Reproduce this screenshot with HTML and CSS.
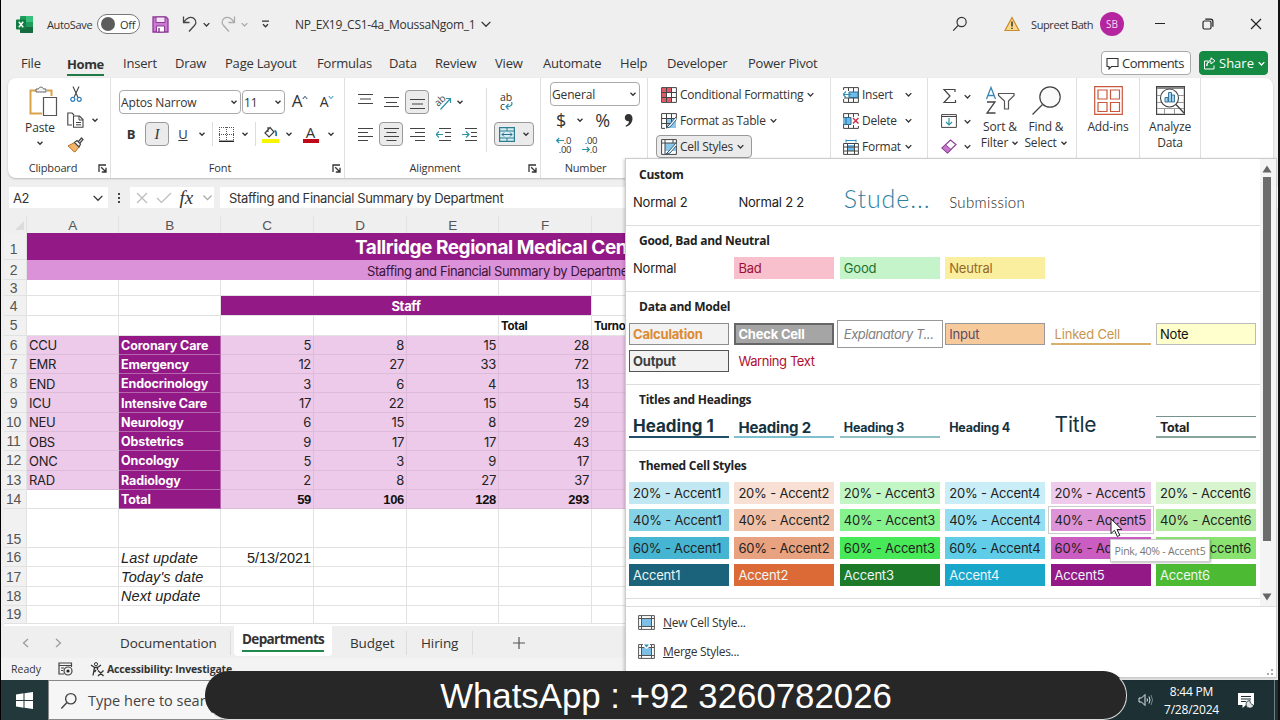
FILE: index.html
```html
<!DOCTYPE html>
<html lang="en">
<head>
  <meta charset="UTF-8" />
  <meta name="viewport" content="width=device-width, initial-scale=1.0" />
  <title>NP_EX19_CS1-4a_MoussaNgom_1 - Excel</title>
  <link rel="stylesheet" href="styles.css">
</head>
<body>
  <svg class="defs" width="0" height="0">
    <symbol id="chev" viewBox="0 0 8 8"><path d="M1.5 2.8 4 5.3 6.5 2.8" fill="none" stroke="currentColor" stroke-width="1.3" vector-effect="non-scaling-stroke"/></symbol>
    <symbol id="launch" viewBox="0 0 9 9"><path d="M1 8V1H8M3.2 3.2 7.5 7.5M8 3.8V8H3.8" fill="none" stroke="#333" stroke-width="1.3"/></symbol>
    <symbol id="search" viewBox="0 0 16 16"><circle cx="9.6" cy="6" r="4.6" fill="none" stroke="currentColor" stroke-width="1.2"/><path d="M6.2 9.4 1.2 14.6" stroke="currentColor" stroke-width="1.3"/></symbol>
    <symbol id="cellstyle" viewBox="0 0 17 15"><path d="M.6.6H16.400V14.400H.6Z" fill="#fff" stroke="#555"/><path d="M4 3.500H13V11.500H4Z" fill="#7cc0e8"/><path d="M3.500 1V14M13.500 1V14M1 3.500H16M1 11.500H16" stroke="#555" fill="none"/></symbol>
  </svg>

  <div class="window">
    <header class="titlebar">
      <svg class="xl" width="17" height="17" viewBox="0 0 17 17"><rect x="4" y="0" width="13" height="17" rx="1" fill="#1f9c5c"/><path d="M10 0H16a1 1 0 0 1 1 1V6H10Z" fill="#35c07c"/><path d="M4 11H17V16a1 1 0 0 1-1 1H5a1 1 0 0 1-1-1Z" fill="#156b3e"/><rect x="0" y="3.5" width="10" height="10" rx="1" fill="#107c41"/><path d="M2.8 5.8 7.2 11.2M7.2 5.8 2.8 11.2" stroke="#fff" stroke-width="1.5"/></svg>
      <span class="autosave">AutoSave</span>
      <span class="toggle"><i></i>Off</span>
      <svg class="save" width="17" height="17" viewBox="0 0 17 17"><path d="M1 1H14L16 3V16H1Z" fill="#c97bd0" stroke="#8e3a98" stroke-width="1.3"/><path d="M4 1H13V6.5H4Z" fill="#f3e3f5" stroke="#8e3a98"/><path d="M4.500 10H12.500V16H4.500Z" fill="#fff" stroke="#8e3a98"/><path d="M7 12V16" stroke="#8e3a98" stroke-width="1.5"/></svg>
      <svg class="undo" width="18" height="18" viewBox="0 0 18 18"><path d="M2.500 1.500V7.500H8.500M2.800 7.200C6 2.500 10 1.200 13 3.500 16.500 6.500 14.500 9.500 13 11L8 16.500" fill="none" stroke="#444" stroke-width="1.300"/></svg>
      <svg class="more" width="9" height="9"><use href="#chev"/></svg>
      <svg class="redo" width="18" height="18" viewBox="0 0 18 18"><path d="M15.500 1.500V7.500H9.500M15.200 7.200C12 2.500 8 1.200 5 3.500 1.500 6.500 3.500 9.500 5 11L10 16.500" fill="none" stroke="#aaa" stroke-width="1.300"/></svg>
      <svg class="more pale" width="9" height="9"><use href="#chev"/></svg>
      <svg class="customize" width="9" height="9" viewBox="0 0 9 9"><path d="M1 1.200H8M2 4.200 4.500 6.800 7 4.200" fill="none" stroke="#333" stroke-width="1.300"/></svg>
      <span class="docname">NP_EX19_CS1-4a_MoussaNgom_1</span>
      <svg width="14" height="14"><use href="#chev"/></svg>
      <svg class="find-icon" width="16" height="16"><use href="#search"/></svg>
      <svg class="alert" width="16" height="16" viewBox="0 0 16 16"><path d="M8 1.500 15 14.500H1Z" fill="#f9d98a" stroke="#c98b2b" stroke-width="1.200"/><path d="M8 5.500V10.500M8 11.700V13" stroke="#333" stroke-width="1.500"/></svg>
      <span class="username">Supreet Bath</span>
      <span class="avatar">SB</span>
      <svg class="winbtn" width="12" height="12"><path d="M1 5.500H11" stroke="#222"/></svg>
      <svg class="winbtn" width="12" height="12" viewBox="0 0 12 12"><rect x="1" y="3" width="8" height="8" rx="1.500" fill="none" stroke="#222" stroke-width="1.200"/><path d="M3.300 1.100H8.500A2.400 2.400 0 0 1 10.900 3.500V8.700" fill="none" stroke="#222" stroke-width="1.200"/></svg>
      <svg class="winbtn" width="12" height="12"><path d="M1 1 11 11M11 1 1 11" stroke="#222" stroke-width="1.200"/></svg>
    </header>

    <nav class="tabs">
      <span>File</span><span class="active">Home</span><span>Insert</span><span>Draw</span><span>Page Layout</span><span>Formulas</span><span>Data</span><span>Review</span><span>View</span><span>Automate</span><span>Help</span><span>Developer</span><span>Power Pivot</span>
      <button class="comments"><svg width="13" height="13" viewBox="0 0 13 13"><path d="M1 1.500H12V9.500H5.500L3 12V9.500H1Z" fill="none" stroke="#333" stroke-width="1.100"/></svg>Comments</button>
      <button class="share"><svg width="13" height="13" viewBox="0 0 13 13"><path d="M5 4H1.500V12H11V8.500M3.800 9C4 6 5.500 4.800 8 4.600V7L12 3.800 8 .8V3C6 3.200 3.800 4.800 3.800 9Z" fill="none" stroke="#fff"/></svg>Share<svg width="9" height="9"><use href="#chev"/></svg></button>
    </nav>

    <section class="ribbon">
      <div class="group clipboard">
        <div class="paste">
          <svg width="30" height="32" viewBox="0 0 30 32"><path d="M8 4.500H2.500V27.500H14M19 4.500H23.500V10" fill="none" stroke="#dba24a" stroke-width="2"/><path d="M8 6V3H10.500C11 .5 15 .5 15.500 3H18V6Z" fill="#f4f4f4" stroke="#666"/><path d="M15.500 11.500H28.500V29.500H15.500Z" fill="#fff" stroke="#555" stroke-width="1.200"/></svg>
          <span>Paste</span>
          <svg width="8" height="8"><use href="#chev"/></svg>
        </div>
        <div class="clip-tools">
          <svg width="12" height="17" viewBox="0 0 12 17"><path d="M3 .5 8 11.500M9 .5 4 11.500" stroke="#444" stroke-width="1.100"/><circle cx="2.800" cy="13.300" r="2" fill="none" stroke="#2f7fb8" stroke-width="1.200"/><circle cx="9.200" cy="13.300" r="2" fill="none" stroke="#2f7fb8" stroke-width="1.200"/></svg>
          <span class="row"><svg width="17" height="16" viewBox="0 0 17 16"><path d="M5 13H.8V1H5L7 3M6.500 4H12.500L16 7.500V15.200H6.500Z" fill="none" stroke="#444" stroke-width="1.100"/><path d="M12 4V8H16M9 10.500H14M9 12.800H14" fill="none" stroke="#444"/></svg><svg width="8" height="8"><use href="#chev"/></svg></span>
          <svg width="17" height="16" viewBox="0 0 17 16"><path d="M1 9 7.500 5.500 12 10 8 15 5.500 13.500 4.500 12Z" fill="#f3b46c" stroke="#bb7326"/><path d="M7.500 5.500 10 3.500 13.500 7 12 10ZM11.500 4.500 14.500 1 16 2.500 13 6" fill="#fff" stroke="#444" stroke-width="1.200"/></svg>
        </div>
        <div class="caption">Clipboard<svg width="9" height="9"><use href="#launch"/></svg></div>
      </div>

      <div class="group font">
        <div class="font-row1">
          <span class="select">Aptos Narrow<svg width="8" height="8"><use href="#chev"/></svg></span>
          <span class="select">11<svg width="8" height="8"><use href="#chev"/></svg></span>
          <span class="bigA">A<svg width="6" height="5" viewBox="0 0 6 5"><path d="M.8 4 3 1.300 5.200 4" fill="none" stroke="#246" stroke-width="1"/></svg></span>
          <span class="bigA small">A<svg width="6" height="5" viewBox="0 0 6 5"><path d="M.8 1 3 3.700 5.200 1" fill="none" stroke="#28a" stroke-width="1"/></svg></span>
        </div>
        <div class="font-row2">
          <b>B</b>
          <span class="pressed"><i>I</i></span>
          <u>U</u>
          <svg width="8" height="8"><use href="#chev"/></svg>
          <span class="vline"></span>
          <svg width="15" height="15" viewBox="0 0 15 15"><path d="M.5 0V14M14.500 0V14M7.500 0V14M0 .5H15M0 7.500H15" stroke="#555" stroke-dasharray="1 1"/><path d="M0 14.300H15" stroke="#222" stroke-width="1.400"/></svg>
          <svg width="8" height="8"><use href="#chev"/></svg>
          <span class="vline"></span>
          <svg width="17" height="17" viewBox="0 0 17 17"><path d="M3 7 8 1.500 12 6 7 11ZM6 1V6" fill="none" stroke="#444" stroke-width="1.200"/><path d="M12.500 4.500C14.500 5 14.500 7 14 10" fill="none" stroke="#26709c" stroke-width="1.800"/><rect x="0" y="13" width="17" height="4" fill="#f6f600"/></svg>
          <svg width="8" height="8"><use href="#chev"/></svg>
          <span class="fontcolor">A</span>
          <svg width="8" height="8"><use href="#chev"/></svg>
        </div>
        <div class="caption">Font<svg width="9" height="9"><use href="#launch"/></svg></div>
      </div>

      <div class="group alignment">
        <div class="align-body">
          <div class="align-grid">
            <svg class="up" width="15" height="15" viewBox="0 0 15 15"><path d="M0 2.500H15M2 7H13M0 11.500H15" stroke="#444" stroke-width="1.100"/></svg>
            <svg width="15" height="15" viewBox="0 0 15 15"><path d="M0 2.500H15M2 7.500H13M0 11.500H15" stroke="#444" stroke-width="1.100"/></svg>
            <span class="pressed"><svg width="15" height="15" viewBox="0 0 15 15"><path d="M0 4.500H15M2 9H13M0 13.500H15" stroke="#444" stroke-width="1.100"/></svg></span>
            <svg width="20" height="20" viewBox="0 0 20 20"><text x="2" y="13" font-size="10" transform="rotate(-42 6 10)">ab</text><path d="M7.500 17.500 17 7M13 6.500H17.500V11" fill="none" stroke="#2b93a8" stroke-width="1.200"/></svg>
            <svg class="near" width="8" height="8"><use href="#chev"/></svg>
            <svg width="15" height="15" viewBox="0 0 15 15"><path d="M0 1.500H15M0 5.500H10M0 9.500H15M0 13.500H10" stroke="#444" stroke-width="1.100"/></svg>
            <span class="pressed"><svg width="15" height="15" viewBox="0 0 15 15"><path d="M0 1.500H15M2.500 5.500H12.500M0 9.500H15M2.500 13.500H12.500" stroke="#444" stroke-width="1.100"/></svg></span>
            <svg width="15" height="15" viewBox="0 0 15 15"><path d="M0 1.500H15M5 5.500H15M0 9.500H15M5 13.500H15" stroke="#444" stroke-width="1.100"/></svg>
            <svg width="15" height="15" viewBox="0 0 15 15"><path d="M3 1.500H15M9 5.500H15M9 9.500H15M3 13.500H15" stroke="#444" stroke-width="1.100"/><path d="M0 7.500H7M3 4.500 0 7.500 3 10.500" fill="none" stroke="#2b93a8" stroke-width="1.200"/></svg>
            <svg width="15" height="15" viewBox="0 0 15 15"><path d="M3 1.500H15M9 5.500H15M9 9.500H15M3 13.500H15" stroke="#444" stroke-width="1.100"/><path d="M0 7.500H7M4 4.500 7 7.500 4 10.500" fill="none" stroke="#2b93a8" stroke-width="1.200"/></svg>
          </div>
          <span class="vline tall"></span>
          <div class="wrapcol">
            <div class="wrap-icon"><span>ab</span><span>c<svg width="8" height="9" viewBox="0 0 8 9"><path d="M6.500 0C8 3 5.500 4.800 1 4.800M3.500 2 1 4.800 3.500 7.500" fill="none" stroke="#2b93a8" stroke-width="1.200"/></svg></span></div>
            <span class="pressed merge"><svg width="16" height="15" viewBox="0 0 16 15"><path d="M.6.6H15.400V14.400H.6Z" fill="#d8eef4" stroke="#2b7d90" stroke-width="1.200"/><path d="M1 4H15M1 11H15M8 1V4M8 11V14" stroke="#2b7d90"/><path d="M3 7.500H13M5 5.500 3 7.500 5 9.500M11 5.500 13 7.500 11 9.500" fill="none" stroke="#2a6d8c"/></svg><svg width="8" height="8"><use href="#chev"/></svg></span>
          </div>
        </div>
        <div class="caption">Alignment<svg width="9" height="9"><use href="#launch"/></svg></div>
      </div>

      <div class="group number">
        <span class="select">General<svg width="8" height="8"><use href="#chev"/></svg></span>
        <div class="num-row"><span>$</span><svg width="8" height="8"><use href="#chev"/></svg><span>%</span><svg width="9" height="13" viewBox="0 0 9 13"><path d="M4.500 0C7 0 8.500 1.800 8.500 4.500 8.500 8.500 6 11.500 2 12.800L1.500 11.800C4 10.500 5 9 5 7.300 2.500 7.500 .8 6 .8 3.700 .8 1.500 2.500 0 4.500 0Z" fill="#333"/></svg></div>
        <div class="dec-row">
          <div><span class="r"><svg width="8" height="7" viewBox="0 0 8 7"><path d="M.7 3.500H8M3.200 1 .7 3.500 3.200 6" fill="none" stroke="#2b93a8" stroke-width="1.200"/></svg>.0</span><span class="r">.00</span></div>
          <div><span class="r">.00</span><span class="r"><svg width="8" height="7" viewBox="0 0 8 7"><path d="M0 3.500H7.300M4.800 1 7.300 3.500 4.800 6" fill="none" stroke="#2b93a8" stroke-width="1.200"/></svg>.0</span></div>
        </div>
        <div class="caption">Number</div>
      </div>

      <div class="group styles">
        <span class="cmd"><svg width="16" height="16" viewBox="0 0 16 16"><path d="M.6.6H15.400V15.400H.6Z" fill="#fff" stroke="#444"/><path d="M1 1H10V5H5V11H11V15H1Z" fill="#e05a6a"/><path d="M5.500 1V15M10.500 1V15M1 5.500H15M1 10.500H15" stroke="#444"/></svg>Conditional Formatting<svg width="9" height="9"><use href="#chev"/></svg></span>
        <span class="cmd"><svg width="16" height="16" viewBox="0 0 16 16"><path d="M15.400 6V.6H.6V15.400H4" fill="none" stroke="#444"/><path d="M5 6H15V15H5Z" fill="#8ac7ea"/><path d="M5.500 1V15M10.500 1V11M1 5.500H15M1 10.500H11" stroke="#444"/><path d="M15 4 8 12 5 15 9 14 15.500 6.500" fill="#fff" stroke="#2d5d7a"/></svg>Format as Table<svg width="9" height="9"><use href="#chev"/></svg></span>
        <span class="cmd on"><svg width="16" height="16" viewBox="0 0 16 16"><path d="M.6.6H15.400V15.400H.6Z" fill="#fff" stroke="#444"/><path d="M4 4H15V12H4Z" fill="#8ac7ea"/><path d="M4 1V15M1 4H15M12 1V4" stroke="#444"/><path d="M15 4 8 12 5 15 9 14 15.500 6.500" fill="#fff" stroke="#2d5d7a"/></svg>Cell Styles<svg width="9" height="9"><use href="#chev"/></svg></span>
      </div>

      <div class="group cells">
        <span class="cmd"><svg width="16" height="16" viewBox="0 0 16 16"><path d="M.6 3V.6H15.400V15.400H.6V12M5.500 1V4M10.500 1V15M1 11H15M5.500 11V15" fill="none" stroke="#444"/><path d="M6 5H15V10.500H6Z" fill="#6cbbe8" stroke="#2d6d94"/><path d="M0 7.500H8M3 4.500 0 7.500 3 10.500" fill="none" stroke="#2d8fbd" stroke-width="1.200"/></svg>Insert<svg width="9" height="9"><use href="#chev"/></svg></span>
        <span class="cmd"><svg width="16" height="16" viewBox="0 0 16 16"><path d="M.6 4V.6H15.400V3M.6 12V15.400H15.400V13M5.500 1V4M10.500 1V4M5.500 12V15M10.500 12V15" fill="none" stroke="#444"/><path d="M0 4.500H8V11.500H0M3 4.500V11.500" fill="#6cbbe8" stroke="#2d6d94"/><path d="M10 5 15.500 10.500M15.500 5 10 10.500" stroke="#cf3346" stroke-width="1.500"/></svg>Delete<svg width="9" height="9"><use href="#chev"/></svg></span>
        <span class="cmd"><svg width="16" height="16" viewBox="0 0 16 16"><path d="M.6 4.500H15.400V15.400H.6Z" fill="#fff" stroke="#444"/><path d="M5 6H11V12H5Z" fill="#6cbbe8"/><path d="M4.500 4V15M11.500 4V15M1 8H15M1 12H15" stroke="#444"/><path d="M3 .5V3.500M13 .5V3.500M3 1.500H13" stroke="#2d8fbd"/></svg>Format<svg width="9" height="9"><use href="#chev"/></svg></span>
      </div>

      <div class="group editing">
        <div class="edit-col">
          <svg width="15" height="16" viewBox="0 0 15 16"><path d="M13 4V1.500H2L8 8 2 14.500H13.500V12" fill="none" stroke="#444" stroke-width="1.200"/></svg><svg width="9" height="9"><use href="#chev"/></svg>
          <svg width="16" height="14" viewBox="0 0 16 14"><path d="M.6.6H15.400V13.400H.6ZM.6 2.500H15.400" fill="none" stroke="#444"/><path d="M8 4V11M5 8 8 11 11 8" fill="none" stroke="#2b93a8" stroke-width="1.200"/></svg><svg width="9" height="9"><use href="#chev"/></svg>
          <svg width="16" height="15" viewBox="0 0 16 15"><path d="M1 9 9.500 1 15 5.500 6.500 14Z" fill="#fff" stroke="#8c3f96" stroke-width="1.200"/><path d="M1 9 4.500 5.700 10 10.500 6.500 14Z" fill="#c678cf" stroke="#8c3f96"/></svg><svg width="9" height="9"><use href="#chev"/></svg>
        </div>
        <div class="big sort"><svg width="30" height="29" viewBox="0 0 30 29"><path d="M1.500 13 6 1.500 10.500 13M3 9.500H9" fill="none" stroke="#3a86b5" stroke-width="1.300"/><path d="M2 16H10L2 27H10.500" fill="none" stroke="#444" stroke-width="1.300"/><path d="M13.500 7.500H29V9.500L23.500 15V23H19.500V15L13.500 9.500Z" fill="none" stroke="#555" stroke-width="1.200"/></svg><span>Sort &amp;<br>Filter<svg width="8" height="8"><use href="#chev"/></svg></span></div>
        <div class="big find"><svg width="30" height="29" viewBox="0 0 30 29"><circle cx="19" cy="11" r="10.200" fill="#fafafa" stroke="#444" stroke-width="1.200"/><path d="M11.500 18.500 1.500 28.500" stroke="#444" stroke-width="1.300"/></svg><span>Find &amp;<br>Select<svg width="8" height="8"><use href="#chev"/></svg></span></div>
      </div>

      <div class="group addins"><div class="big"><svg width="29" height="29" viewBox="0 0 29 29"><g fill="none" stroke="#c9573c" stroke-width="1.200"><path d="M.7.7H28.300V28.300H.7Z"/><path d="M4 4H13V13H4ZM16.500 4H25.500V13H16.500ZM4 16.500H13V25.500H4ZM16.500 16.500H25.500V25.500H16.500Z"/></g></svg><span>Add-ins</span></div></div>
      <div class="group analyze"><div class="big"><svg width="29" height="29" viewBox="0 0 29 29"><path d="M.6.6H28.400V28.400H.6Z" fill="#fff" stroke="#444" stroke-width="1.200"/><path d="M1 2H28" stroke="#888" stroke-width="2"/><path d="M1 9.500H28M1 16.500H28M1 22.500H28M8.500 22V28M18.500 22V28" stroke="#999"/><circle cx="13.500" cy="12" r="9" fill="#fff" stroke="#444" stroke-width="1.100"/><path d="M20 18.500 28 27" stroke="#444" stroke-width="1.300"/><path d="M9 11.500H12V16H9ZM12.500 6.500H15.500V16H12.500ZM15.500 9H18.500V16H15.500Z" fill="#a5d2ec" stroke="#2d6d94" stroke-width=".9"/></svg><span>Analyze<br>Data</span></div></div>
    </section>

    <section class="formulabar">
      <div class="namebox">A2<svg width="14" height="14"><use href="#chev"/></svg></div>
      <div class="dots"><i></i><i></i><i></i></div>
      <div class="fx">
        <svg width="12" height="12" viewBox="0 0 12 12"><path d="M1 1 11 11M11 1 1 11" stroke="#bbb" stroke-width="1.200"/></svg>
        <svg width="16" height="12" viewBox="0 0 16 12"><path d="M1 6 5.500 10.500 15 1" fill="none" stroke="#bbb" stroke-width="1.200"/></svg>
        <em>fx</em>
        <svg width="13" height="13" class="pale"><use href="#chev"/></svg>
      </div>
      <div class="formula">Staffing and Financial Summary by Department</div>
    </section>

    <main class="sheet">
      <div class="colhead corner"><svg width="9" height="9"><path d="M9 0V9H0Z" fill="#dcdcdc"/></svg></div><div class="colhead">A</div><div class="colhead">B</div><div class="colhead">C</div><div class="colhead">D</div><div class="colhead">E</div><div class="colhead">F</div><div class="colhead"></div>
      <div class="rh first">1</div><div class="title">Tallridge Regional Medical Center</div>
      <div class="rh">2</div><div class="subtitle">Staffing and Financial Summary by Department</div>
      <div class="rh">3</div><div></div><div></div><div></div><div></div><div></div><div></div><div></div>
      <div class="rh">4</div><div></div><div></div><div class="staff">Staff</div><div></div>
      <div class="rh">5</div><div></div><div></div><div></div><div></div><div></div><div class="head">Total</div><div class="head">Turnover</div>
      <div class="rh">6</div><div class="p">CCU</div><div class="d">Coronary Care</div><div class="n">5</div><div class="n">8</div><div class="n">15</div><div class="n">28</div><div class="n"></div>
      <div class="rh">7</div><div class="p">EMR</div><div class="d">Emergency</div><div class="n">12</div><div class="n">27</div><div class="n">33</div><div class="n">72</div><div class="n"></div>
      <div class="rh">8</div><div class="p">END</div><div class="d">Endocrinology</div><div class="n">3</div><div class="n">6</div><div class="n">4</div><div class="n">13</div><div class="n"></div>
      <div class="rh">9</div><div class="p">ICU</div><div class="d">Intensive Care</div><div class="n">17</div><div class="n">22</div><div class="n">15</div><div class="n">54</div><div class="n"></div>
      <div class="rh">10</div><div class="p">NEU</div><div class="d">Neurology</div><div class="n">6</div><div class="n">15</div><div class="n">8</div><div class="n">29</div><div class="n"></div>
      <div class="rh">11</div><div class="p">OBS</div><div class="d">Obstetrics</div><div class="n">9</div><div class="n">17</div><div class="n">17</div><div class="n">43</div><div class="n"></div>
      <div class="rh">12</div><div class="p">ONC</div><div class="d">Oncology</div><div class="n">5</div><div class="n">3</div><div class="n">9</div><div class="n">17</div><div class="n"></div>
      <div class="rh">13</div><div class="p">RAD</div><div class="d">Radiology</div><div class="n">2</div><div class="n">8</div><div class="n">27</div><div class="n">37</div><div class="n"></div>
      <div class="rh">14</div><div></div><div class="d">Total</div><div class="n sum">59</div><div class="n sum">106</div><div class="n sum">128</div><div class="n sum">293</div><div class="n"></div>
      <div class="rh low">15</div><div></div><div></div><div></div><div></div><div></div><div></div><div></div>
      <div class="rh">16</div><div></div><div class="note">Last update</div><div class="date">5/13/2021</div><div></div><div></div><div></div><div></div>
      <div class="rh">17</div><div></div><div class="note">Today's date</div><div></div><div></div><div></div><div></div><div></div>
      <div class="rh">18</div><div></div><div class="note">Next update</div><div></div><div></div><div></div><div></div><div></div>
      <div class="rh">19</div><div></div><div></div><div></div><div></div><div></div><div></div><div></div>
    </main>

    <div class="sheettabs">
      <svg width="8" height="10" viewBox="0 0 8 10"><path d="M6 1 1.500 5 6 9" fill="none" stroke="#999" stroke-width="1.200"/></svg>
      <svg width="8" height="10" viewBox="0 0 8 10"><path d="M2 1 6.500 5 2 9" fill="none" stroke="#999" stroke-width="1.200"/></svg>
      <span class="tab">Documentation</span>
      <span class="current"><b>Departments</b></span>
      <span class="tab">Budget</span>
      <span class="tab">Hiring</span>
      <svg class="add" width="12" height="12" viewBox="0 0 12 12"><path d="M6 0V12M0 6H12" stroke="#555" stroke-width="1.200"/></svg>
    </div>
    <div class="statusbar">
      <span>Ready</span>
      <svg width="15" height="14" viewBox="0 0 15 14"><path d="M6 12H1V1H13.500V5M1 3.500H13.500M3 6H6M3 8.500H5" fill="none" stroke="#444" stroke-width="1.200"/><circle cx="10" cy="9" r="4" fill="#f3f3f3" stroke="#444" stroke-width="1.200"/><circle cx="10" cy="9" r="1.600" fill="#222"/></svg>
      <svg width="15" height="15" viewBox="0 0 15 15"><circle cx="6" cy="2.200" r="1.600" fill="none" stroke="#333"/><path d="M1 3 4.500 5.500 3 13.500M11 3 7.500 5.500V8M4.500 5.500H7.500M4.500 10 6 8M8 8.500 13.500 14M13.500 8.500 8 14" fill="none" stroke="#333" stroke-width="1.300"/></svg>
      <b>Accessibility: Investigate</b>
    </div>
  </div>

  <footer class="taskbar">
    <div class="start"><svg width="17" height="17" viewBox="0 0 17 17"><path d="M0 2.400 7.500 1.300V8H0ZM8.500 1.200 17 0V8H8.500ZM0 9H7.500V15.700L0 14.600ZM8.500 9H17V17L8.500 15.800Z" fill="#fff"/></svg></div>
    <div class="searchbox"><svg width="18" height="18"><use href="#search"/></svg>Type here to search</div>
    <div class="tray">
      <svg width="16" height="14" viewBox="0 0 16 14"><path d="M1 5H3.500L7 1.500V12.500L3.500 9H1Z" fill="none" stroke="#dfe5e6"/><path d="M9 5.500Q10 7 9 8.500M11 3.500Q13 7 11 10.500" fill="none" stroke="#dfe5e6"/><path d="M13 2Q16 7 13 12" fill="none" stroke="#75868a"/></svg>
      <div class="clock">8:44 PM<br>7/28/2024</div>
      <svg width="18" height="17" viewBox="0 0 18 17"><path d="M1 1H17V13H9L5.500 16V13H1Z" fill="#fff"/><path d="M4 4.500H14M4 7H14M4 9.500H9" stroke="#1d3033"/><path d="M13 8.500A3.800 3.800 0 1 0 16.500 13 4 4 0 0 1 13 8.500Z" fill="#dfe5e6" stroke="#1d3033" stroke-width=".8"/></svg>
      <span class="peek"></span>
    </div>
  </footer>

  <aside class="menu">
    <div class="gallery">
      <div class="lists">
        <section><h3>Custom</h3><div class="cellgrid">
          <span>Normal 2</span><span>Normal 2 2</span><span class="student">Stude...</span><span class="submission">Submission</span>
        </div></section>
        <section><h3>Good, Bad and Neutral</h3><div class="cellgrid">
          <span>Normal</span><span class="bad">Bad</span><span class="good">Good</span><span class="neutral">Neutral</span>
        </div></section>
        <section><h3>Data and Model</h3><div class="cellgrid">
          <span class="calc">Calculation</span><span class="check">Check Cell</span><span class="expl">Explanatory T...</span><span class="input">Input</span><span class="linked">Linked Cell</span><span class="notecell">Note</span>
          <span class="output">Output</span><span class="warning">Warning Text</span>
        </div></section>
        <section><h3>Titles and Headings</h3><div class="cellgrid">
          <span class="h1">Heading 1</span><span class="h2">Heading 2</span><span class="h3">Heading 3</span><span class="h4">Heading 4</span><span class="ttl">Title</span><span class="total">Total</span>
        </div></section>
        <section><h3>Themed Cell Styles</h3><div class="cellgrid">
          <span class="a1-20">20% - Accent1</span><span class="a2-20">20% - Accent2</span><span class="a3-20">20% - Accent3</span><span class="a4-20">20% - Accent4</span><span class="a5-20">20% - Accent5</span><span class="a6-20">20% - Accent6</span>
          <span class="a1-40">40% - Accent1</span><span class="a2-40">40% - Accent2</span><span class="a3-40">40% - Accent3</span><span class="a4-40">40% - Accent4</span><span class="a5-40 hover">40% - Accent5</span><span class="a6-40">40% - Accent6</span>
          <span class="a1-60">60% - Accent1</span><span class="a2-60">60% - Accent2</span><span class="a3-60">60% - Accent3</span><span class="a4-60">60% - Accent4</span><span class="a5-60">60% - Accent5</span><span class="a6-60">60% - Accent6</span>
          <span class="solid a1">Accent1</span><span class="solid a2">Accent2</span><span class="solid a3">Accent3</span><span class="solid a4">Accent4</span><span class="solid a5">Accent5</span><span class="solid a6">Accent6</span>
        </div></section>
      </div>
      <div class="scroll">
        <svg width="10" height="8" viewBox="0 0 10 8"><path d="M5 .5 9.500 7.500H.5Z" fill="#666"/></svg>
        <i></i>
        <svg class="down" width="10" height="8" viewBox="0 0 10 8"><path d="M5 7.500 9.500 .5H.5Z" fill="#666"/></svg>
      </div>
    </div>
    <div class="actions">
      <div><svg width="17" height="15"><use href="#cellstyle"/></svg><span><u>N</u>ew Cell Style...</span></div>
      <div><svg width="17" height="15" viewBox="0 0 17 15"><use href="#cellstyle"/><path d="M5 0H12V2.500L8.500 5 5 2.500Z" fill="#fff"/><path d="M6 .5H11L8.500 3.500Z" fill="#2d8fbd"/></svg><span><u>M</u>erge Styles...</span></div>
      <svg class="grip" width="8" height="8"><path d="M5 0H7V2H5ZM5 4H7V6H5ZM1 4H3V6H1Z" fill="#aaa"/></svg>
    </div>
  </aside>

  <div class="tooltip">Pink, 40% - Accent5</div>
  <svg class="cursor" width="14" height="20" viewBox="0 0 14 20"><path d="M1 1V15.500L4.500 12.300 7.300 18.500 9.800 17.300 7 11.500H12Z" fill="#fff" stroke="#222"/></svg>
  <div class="banner">WhatsApp : +92 3260782026</div>
</body>
</html>
```
FILE: styles.css
```css
* {
  box-sizing: border-box;
}
body {
  margin: 0;
  width: 1280px;
  height: 720px;
  overflow: hidden;
  position: relative;
  background: #efefef;
  color: #333;
  font-family: "Open Sans", "Noto Sans", sans-serif;
  font-size: 12px;
  display: flex;
  flex-direction: column;
  border-left: 1px solid #000;
  border-right: 2px solid #111;
}
svg {
  display: block;
  flex: none;
}
svg text {
  font-family: "Open Sans", sans-serif;
  fill: #444;
}
.defs {
  position: absolute;
}
.pale {
  color: #aaa;
}
.window {
  height: 680px;
  flex: none;
}

/* title bar */
.titlebar {
  height: 48px;
  display: flex;
  align-items: center;
  white-space: nowrap;
}
.xl {
  margin-left: 15px;
}
.autosave {
  width: 50px;
  margin-left: 14px;
  font-size: 11px;
  letter-spacing: -0.35px;
}
.toggle {
  width: 43px;
  height: 20px;
  border: 1px solid #777;
  border-radius: 10px;
  background: #fff;
  display: flex;
  align-items: center;
  gap: 5px;
  padding-left: 3px;
  font-size: 11px;
  letter-spacing: -0.2px;
}
.toggle i {
  width: 14px;
  height: 14px;
  border-radius: 50%;
  background: #5c5c5c;
}
.save {
  margin-left: 12px;
}
.undo {
  margin-left: 12px;
}
.more {
  margin-left: 3px;
}
.redo {
  margin-left: 8px;
}
.customize {
  margin-left: 12px;
}
.docname {
  width: 184px;
  margin-left: 25px;
  font-size: 12px;
  letter-spacing: -0.25px;
}
.find-icon {
  margin-left: 459px;
}
.alert {
  margin-left: 36px;
}
.username {
  margin-left: 11px;
  width: 69px;
  font-size: 11px;
  letter-spacing: -0.4px;
}
.avatar {
  width: 24px;
  height: 24px;
  border-radius: 50%;
  background: #b4259f;
  color: #f6d9f2;
  font-size: 10px;
  display: flex;
  align-items: center;
  justify-content: center;
}
.winbtn {
  margin-left: 36px;
}
.avatar + .winbtn {
  margin-left: 30px;
}

/* ribbon tabs */
.tabs {
  height: 30px;
  display: grid;
  grid-template-columns: 46px 56px 52px 50px 92px 72px 46px 60px 48px 77px 47px 81px 353px 90px 78px;
  padding-left: 20px;
  align-items: center;
  font-size: 13px;
  letter-spacing: -0.2px;
  white-space: nowrap;
}
.tabs span {
  padding-bottom: 1px;
}
.tabs .active {
  width: 37px;
  margin-top: 4px;
  font-weight: 700;
  border-bottom: 2px solid #1f7a45;
  letter-spacing: -0.4px;
}
.tabs button {
  height: 24px;
  display: flex;
  align-items: center;
  gap: 3px;
  padding: 0 4px;
  font: inherit;
  border: 1px solid #aaa;
  border-radius: 4px;
  background: #fff;
  color: #333;
}
.tabs .comments {
  width: 90px;
  letter-spacing: -0.55px;
}
.tabs .share {
  width: 69px;
  margin-left: 8px;
  background: #148a42;
  border-color: #148a42;
  color: #fff;
  padding: 0 3px;
}

/* ribbon */
.ribbon {
  height: 100px;
  margin: 0 5px 0 7px;
  background: #fff;
  border-radius: 8px;
  box-shadow: 0 1px 2px #bbb;
  display: flex;
  letter-spacing: -0.15px;
}
.group {
  position: relative;
  border-right: 1px solid #e0e0e0;
  flex: none;
  white-space: nowrap;
}
.caption {
  position: absolute;
  left: 0;
  right: 0;
  bottom: 3px;
  text-align: center;
  font-size: 11px;
}
.caption svg {
  position: absolute;
  right: 3px;
  top: 4px;
}
.clipboard {
  width: 103px;
  display: flex;
}
.clipboard .caption {
  padding-right: 12px;
}
.paste {
  margin: 8px 0 0 14px;
  width: 36px;
  display: flex;
  flex-direction: column;
  align-items: center;
}
.paste svg:first-child {
  margin-left: 5px;
}
.paste svg:last-child {
  margin-top: 3px;
}
.paste span {
  margin-top: 1px;
}
.clip-tools {
  margin: 8px 0 0 9px;
  display: flex;
  flex-direction: column;
  gap: 9px;
}
.clip-tools > svg:first-child {
  margin-left: 3px;
}
.clip-tools .row {
  display: flex;
  align-items: center;
  gap: 7px;
}
.font {
  width: 234px;
  padding: 12px 0 0 8px;
}
.font .caption,
.alignment .caption {
  padding-right: 15px;
}
.select {
  height: 24px;
  border: 1px solid #aaa;
  border-radius: 4px;
  display: flex;
  align-items: center;
  justify-content: space-between;
  padding: 0 2px 0 1px;
  background: #fff;
}
.font-row1 {
  display: grid;
  grid-template-columns: 122px 43px 28px 24px;
  column-gap: 1px;
}
.bigA {
  display: flex;
  justify-content: center;
  font-size: 17px;
  line-height: 22px;
}
.bigA.small {
  font-size: 14px;
  line-height: 24px;
}
.bigA svg {
  margin-top: 5px;
}
.font-row2 {
  margin-top: 8px;
  height: 24px;
  display: grid;
  grid-template-columns: 24px 28px 24px 14px 6px 22px 16px 5px 24px 13px 31px 9px;
  place-items: center;
  font-size: 13px;
}
.font-row2 i {
  font-family: "Liberation Serif", serif;
  font-size: 15px;
}
.pressed {
  width: 24px;
  height: 24px;
  border: 1px solid #999;
  border-radius: 4px;
  background: #ebebeb;
  display: flex;
  align-items: center;
  justify-content: center;
}
.vline {
  width: 1px;
  height: 24px;
  background: #ddd;
}
.fontcolor {
  width: 16px;
  height: 17px;
  font-size: 15px;
  line-height: 12px;
  text-align: center;
  border-bottom: 4px solid #c00818;
}
.alignment {
  width: 196px;
  padding: 10px 0 0 7px;
}
.align-body {
  display: flex;
}
.align-grid {
  padding-top: 2px;
  display: grid;
  grid-template-columns: repeat(5, 26px);
  grid-template-rows: 24px 24px;
  row-gap: 8px;
  place-items: center;
}
.align-grid .up {
  margin-bottom: 6px;
}
.align-grid .near {
  justify-self: start;
}
.vline.tall {
  height: 64px;
  margin-left: 4px;
}
.wrapcol {
  margin-left: 7px;
  padding-top: 5px;
}
.wrap-icon {
  width: 18px;
  height: 18px;
  margin-left: 6px;
  font-size: 10.500px;
  line-height: 9px;
  letter-spacing: 0;
}
.wrap-icon span {
  display: flex;
}
.merge {
  width: 40px;
  margin-top: 11px;
  gap: 7px;
}
.number {
  width: 107px;
  padding: 4px 7px 0 9px;
}
.number .caption {
  padding-right: 17px;
}
.num-row {
  height: 26px;
  padding-left: 1px;
  margin-top: 1px;
  display: grid;
  grid-template-columns: 20px 18px 27px 24px;
  place-items: center;
  font-size: 18px;
}
.dec-row {
  display: flex;
  gap: 8px;
  padding-left: 3px;
  margin-top: 3px;
  font-size: 9.500px;
  line-height: 9px;
  letter-spacing: -0.4px;
}
.dec-row .r {
  width: 18px;
  height: 9px;
  display: flex;
  align-items: center;
  justify-content: flex-end;
}
.styles {
  width: 183px;
  padding: 5px 0 0 8px;
}
.cmd {
  height: 23px;
  margin-bottom: 3px;
  padding: 0 4px 0 4px;
  width: max-content;
  border: 1px solid transparent;
  border-radius: 4px;
  display: flex;
  align-items: center;
  gap: 3px;
  letter-spacing: -0.25px;
}
.cmd.on {
  background: #ebebeb;
  border-color: #999;
  width: 96px;
}
.cells {
  width: 97px;
  padding: 5px 0 0 7px;
}
.cells .cmd {
  width: 80px;
}
.cells .cmd svg:last-child {
  margin-left: auto;
}
.editing {
  width: 149px;
  display: flex;
}
.edit-col {
  margin: 5px 0 0 13px;
  height: 76px;
  display: grid;
  grid-template-columns: 16px 20px;
  place-items: center;
}
.big {
  padding-top: 8px;
  display: flex;
  flex-direction: column;
  align-items: center;
  text-align: center;
  line-height: 16px;
}
.big span {
  margin-top: 4px;
}
.big span svg {
  display: inline-block;
  margin-left: 3px;
}
.big.sort {
  width: 46px;
}
.big.find {
  width: 46px;
}
.addins {
  width: 63px;
}
.analyze {
  width: 61px;
}

/* formula bar */
.formulabar {
  margin-top: 9px;
  height: 21px;
  padding-left: 8px;
  display: flex;
  background: #efefef;
}
.namebox {
  width: 99px;
  background: #fff;
  display: flex;
  align-items: center;
  justify-content: space-between;
  padding: 0 3px 0 4px;
  font-family: Inter, sans-serif;
  font-size: 13px;
  letter-spacing: -0.5px;
}
.dots {
  width: 22px;
  display: flex;
  flex-direction: column;
  align-items: center;
  justify-content: center;
  gap: 2px;
}
.dots i {
  width: 2px;
  height: 2px;
  background: #444;
}
.fx {
  width: 84px;
  background: #fff;
  display: flex;
  align-items: center;
  justify-content: space-between;
  padding: 0 0 0 6px;
}
.fx em {
  font-family: "Liberation Serif", serif;
  font-size: 19px;
  line-height: 18px;
}
.formula {
  margin-left: 6px;
  padding-left: 9px;
  flex: 1;
  background: #fff;
  line-height: 22px;
  font-family: Inter, sans-serif;
  font-size: 13px;
  letter-spacing: -0.35px;
}

/* worksheet */
.sheet {
  margin-top: 8px;
  margin-left: 3px;
  height: 410px;
  width: 690px;
  display: grid;
  grid-template-columns: 23px 92px 102px 93px 93px 92px 93px 102px;
  grid-template-rows: 17px 27px 20px 16px 20px 19.500px repeat(9, 19.300px) 39px 19.300px 19.500px 19px 18px 4px;
  background: #fff;
  overflow: hidden;
  color: #222;
  font-family: Inter, sans-serif;
  font-size: 13px;
  letter-spacing: -0.3px;
}
.sheet > div {
  border-right: 1px solid #e2e2e2;
  border-bottom: 1px solid #e2e2e2;
  padding: 1px 2px 0;
  display: flex;
  align-items: center;
  overflow: hidden;
  white-space: nowrap;
}
.sheet > .colhead {
  background: #efefef;
  justify-content: center;
  border-bottom: none;
  font-family: "Liberation Sans", sans-serif;
  font-size: 13.500px;
  color: #555;
}
.sheet > .corner {
  justify-content: flex-end;
}
.sheet > .rh {
  background: #f1f1f1;
  justify-content: center;
  font-family: "Liberation Sans", sans-serif;
  font-size: 14px;
  color: #555;
  padding: 0 3px 0 0;
}
.sheet > .first {
  padding-top: 6px;
}
.sheet > .low {
  align-items: flex-end;
}
.sheet > .title {
  grid-column: 2 / 9;
  background: #931987;
  color: #fff;
  font-size: 19px;
  font-weight: 700;
  padding-left: 328px;
  letter-spacing: -0.45px;
  border: none;
}
.sheet > .subtitle {
  grid-column: 2 / 9;
  background: #dc92d8;
  color: #3a1438;
  padding-left: 340px;
  letter-spacing: -0.4px;
  border: none;
}
.sheet > .staff {
  grid-column: 4 / 8;
  background: #931987;
  color: #fff;
  font-weight: 700;
  justify-content: center;
}
.sheet > .head {
  font-size: 11.500px;
  font-weight: 700;
  color: #111;
}
.sheet > .p,
.sheet > .n {
  background: #edcae9;
  border-color: #ddbcd9;
}
.sheet > .n {
  justify-content: flex-end;
}
.sheet > .d {
  background: #931987;
  border-color: #b566ad;
  color: #fff;
  font-weight: 700;
  font-size: 12.500px;
  letter-spacing: -0.12px;
}
.sheet > .sum {
  font-family: "Liberation Sans", sans-serif;
  font-weight: 700;
  color: #111;
}
.sheet > .note,
.sheet > .date {
  font-family: "Liberation Sans", sans-serif;
  font-size: 14.500px;
  letter-spacing: -0.05px;
}
.sheet > .note {
  font-style: italic;
  letter-spacing: 0.1px;
}
.sheet > .date {
  justify-content: flex-end;
}

/* sheet tabs and status bar */
.sheettabs {
  height: 32px;
  padding-left: 21px;
  display: grid;
  grid-template-columns: 32px 66px 111px 105px 71px 66px 60px;
  align-items: center;
  font-size: 13.500px;
  letter-spacing: -0.1px;
  background: #efefef;
}
.sheettabs .tab {
  border-right: 1px solid #ddd;
  line-height: 24px;
}
.sheettabs .current ~ .tab {
  padding-left: 14px;
}
.sheettabs .add {
  margin-left: 40px;
}
.current {
  height: 30px;
  width: 98px;
  margin: 0 0 4px 3px;
  background: #fff;
  border-radius: 0 0 4px 4px;
  padding: 2px 0 0 8px;
}
.current b {
  display: inline-block;
  border-bottom: 2px solid #1f8a4c;
  letter-spacing: -0.65px;
  line-height: 22px;
}
.statusbar {
  height: 22px;
  padding-left: 10px;
  display: grid;
  grid-template-columns: 47px 32px 17px 200px;
  align-items: center;
  font-size: 10.500px;
  background: #f3f3f3;
  white-space: nowrap;
}
.statusbar b {
  letter-spacing: -0.15px;
}

/* taskbar */
.taskbar {
  height: 40px;
  background: #1d3033;
  display: flex;
}
.start {
  width: 47px;
  background: #22383b;
  display: flex;
  align-items: center;
  justify-content: center;
}
.taskbar .searchbox {
  width: 345px;
  background: #f6f6f6;
  border: 1px solid #888;
  display: flex;
  align-items: center;
  gap: 10px;
  padding: 1px 0 0 11px;
  font-size: 14.500px;
  color: #444;
}
.tray {
  margin-left: auto;
  display: flex;
  align-items: center;
  color: #fff;
}
.clock {
  margin: 0 18px 0 10px;
  padding-top: 1px;
  font-size: 12px;
  line-height: 18px;
  text-align: center;
  letter-spacing: -0.2px;
}
.peek {
  margin-left: 19px;
  width: 4px;
  height: 40px;
  border-left: 1px solid #6f7f82;
}

/* cell styles drop-down */
.menu {
  position: absolute;
  left: 624px;
  top: 158px;
  width: 652px;
  height: 520px;
  background: #fff;
  border: 1px solid #ccc;
  box-shadow: -1px 1px 3px rgba(0, 0, 0, 0.2);
}
.gallery {
  height: 448px;
  display: flex;
  border-bottom: 1px solid #ddd;
}
.lists {
  width: 634px;
  padding-top: 0.5px;
}
.lists section {
  border-bottom: 1px solid #ddd;
  padding: 0 0 12px 3px;
}
.lists h3 {
  margin: 0;
  height: 31px;
  padding-left: 10px;
  line-height: 30px;
  font-size: 12px;
  letter-spacing: -0.25px;
  color: #222;
}
.cellgrid {
  display: grid;
  grid-template-columns: repeat(6, 100px);
  grid-auto-rows: 22px;
  gap: 5.400px;
  color: #222;
  font-family: Inter, sans-serif;
  font-size: 13px;
  line-height: 23px;
  letter-spacing: -0.2px;
  white-space: nowrap;
}
.cellgrid span {
  padding-left: 4px;
}
.student {
  font-family: Lato, sans-serif;
  font-size: 25px;
  font-weight: 300;
  line-height: 15px;
  color: #2e7f9f;
  letter-spacing: 0.9px;
}
.submission {
  font-family: Lato, sans-serif;
  font-size: 15px;
  font-weight: 300;
  letter-spacing: 0.35px;
}
.bad { background: #f8c0cc; color: #9c1036; }
.good { background: #c6f4ca; color: #23702d; }
.neutral { background: #f9ef9e; color: #94692a; }
.calc { background: #f2f2f2; border: 1px solid #8c8c8c; color: #dc8a33; font-weight: 700; }
.cellgrid .calc,
.cellgrid .output,
.cellgrid .input,
.cellgrid .notecell {
  padding-left: 3px;
  line-height: 21px;
}
.cellgrid .check {
  background: #a5a5a5;
  border: 2px solid #666;
  color: #fff;
  font-weight: 700;
  line-height: 19px;
  padding-left: 2px;
}
.cellgrid .expl {
  margin: -3px;
  padding: 2px 0 0 6px;
  border: 1px solid #999;
  color: #7f7f7f;
  font-style: italic;
  letter-spacing: -0.45px;
}
.input { background: #f7ca9c; border: 1px solid #999; color: #5b4a66; }
.linked { color: #c8954c; border-bottom: 2px solid #d9b06a; }
.notecell { background: #feffcc; border: 1px solid #bbb; color: #111; }
.output { background: #f2f2f2; border: 1px solid #555; color: #3f3f3f; font-weight: 700; }
.warning { color: #b01030; }
.cellgrid .warning { letter-spacing: -0.4px; }
.h1,
.h2,
.h3,
.h4 {
  color: #16323f;
  font-weight: 700;
}
.h1 { font-size: 17px; line-height: 20px; letter-spacing: 0; border-bottom: 2px solid #1d4f66; }
.h2 { font-size: 15px; border-bottom: 2px solid #7fc0cf; }
.h3 { font-size: 12.500px; border-bottom: 2px solid #8fc0c6; }
.h4 { font-size: 12.500px; }
.ttl { font-size: 21px; line-height: 18px; color: #16323f; }
.total {
  font-size: 12.500px;
  font-weight: 700;
  line-height: 21px;
  border-top: 1px solid #76928c;
  border-bottom: 2px solid #86a49c;
}

.a1-20 { background: #c1e8f2; }
.a2-20 { background: #f8e0d4; }
.a3-20 { background: #c3f6c5; }
.a4-20 { background: #c9eef8; }
.a5-20 { background: #efcbeb; }
.a6-20 { background: #d8f5cf; }
.a1-40 { background: #84d2e6; }
.a2-40 { background: #f1c2aa; }
.a3-40 { background: #86f28e; }
.a4-40 { background: #93dff1; }
.a5-40 { background: #dc94d6; }
.a6-40 { background: #b2eca0; }
.a1-60 { background: #46b5d2; }
.a2-60 { background: #e9a280; }
.a3-60 { background: #48e958; }
.a4-60 { background: #5fcde7; }
.a5-60 { background: #cb5cc1; }
.a6-60 { background: #8ae270; }
.solid { color: #eef6f8; }
.a1 { background: #1a637a; }
.a2 { background: #dc6a37; }
.a3 { background: #1c7a29; }
.a4 { background: #19a6cb; }
.a5 { background: #931987; }
.a6 { background: #4dba33; }
.hover {
  outline: 1px solid #ccc;
  outline-offset: 2px;
}
.scroll {
  flex: 1;
  background: #f4f4f4;
  padding: 6px 0 5px 2px;
  display: flex;
  flex-direction: column;
}
.scroll i {
  width: 8px;
  height: 364px;
  margin: 4px 0 0 1px;
  background: #6c6c6c;
}
.scroll .down {
  margin-top: auto;
}
.actions {
  position: relative;
  padding: 1px 0 0 12px;
}
.actions div {
  height: 29px;
  display: flex;
  align-items: center;
  gap: 8px;
  letter-spacing: -0.3px;
}
.grip {
  position: absolute;
  right: 2px;
  top: 62px;
}

/* things floating over the window */
.tooltip {
  position: absolute;
  left: 1109px;
  top: 539px;
  width: 100px;
  height: 23px;
  line-height: 22px;
  text-align: center;
  font-size: 10.500px;
  letter-spacing: -0.2px;
  white-space: nowrap;
  color: #777;
  background: #fff;
  border: 1px solid #ccc;
  box-shadow: 1px 1px 2px rgba(0, 0, 0, 0.25);
}
.cursor {
  position: absolute;
  left: 1109px;
  top: 518px;
}
.banner {
  position: absolute;
  left: 204px;
  top: 671px;
  width: 922px;
  height: 49px;
  border-radius: 24px;
  background: #272727;
  border: 1px solid #ddd;
  border-left-color: #272727;
  border-top-color: #272727;
  color: #fff;
  text-align: center;
  font-family: "Liberation Sans", sans-serif;
  font-size: 34.800px;
  line-height: 48px;
}
```
